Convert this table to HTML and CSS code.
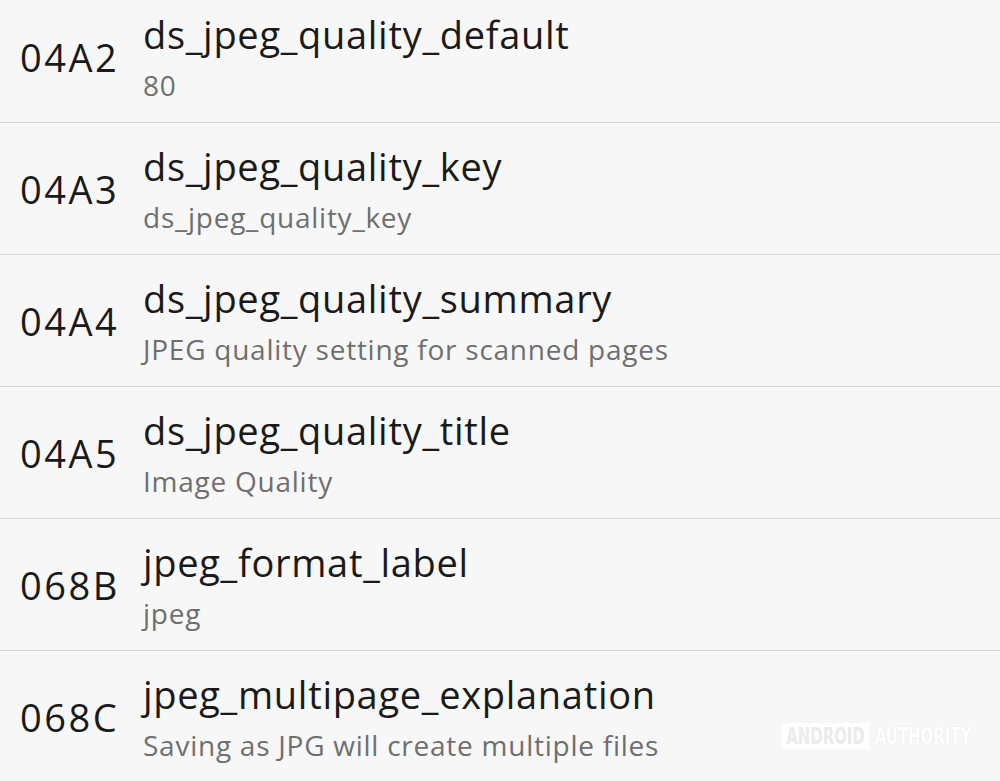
FILE: index.html
```html
<!DOCTYPE html>
<html>

<head>
    <link rel="stylesheet" href="styles.css">
</head>

<body>

    <div class="list">
        <div class="row">
            <div class="code">04A2</div>
            <div class="text">
                <div class="title">ds_jpeg_quality_default</div>
                <div class="summary">80</div>
            </div>
        </div>
        <div class="row">
            <div class="code">04A3</div>
            <div class="text">
                <div class="title">ds_jpeg_quality_key</div>
                <div class="summary">ds_jpeg_quality_key</div>
            </div>
        </div>
        <div class="row">
            <div class="code">04A4</div>
            <div class="text">
                <div class="title">ds_jpeg_quality_summary</div>
                <div class="summary">JPEG quality setting for scanned pages</div>
            </div>
        </div>
        <div class="row">
            <div class="code">04A5</div>
            <div class="text">
                <div class="title">ds_jpeg_quality_title</div>
                <div class="summary">Image Quality</div>
            </div>
        </div>
        <div class="row">
            <div class="code">068B</div>
            <div class="text">
                <div class="title">jpeg_format_label</div>
                <div class="summary">jpeg</div>
            </div>
        </div>
        <div class="row">
            <div class="code">068C</div>
            <div class="text">
                <div class="title">jpeg_multipage_explanation</div>
                <div class="summary">Saving as JPG will create multiple files</div>
            </div>
        </div>
    </div>

    <!-- watermark -->
    <div class="mark">
        <span class="mark-box">ANDROID</span>
        <span class="mark-text">AUTHORITY</span>
    </div>

</body>

</html>
```

FILE: styles.css
```css
html,
body {
    margin: 0;
    height: 100%;
    background: #f7f7f7;
    overflow: hidden;
}

body {
    font-family: "Open Sans", Roboto, sans-serif;
    color: #1a1a1a;
    position: relative;
}

.list {
    margin-top: -9px;
}

.row {
    display: flex;
    align-items: center;
    height: 131px;
    border-bottom: 1px solid #d6d6d6;
}

.code {
    width: 123px;
    padding-left: 20px;
    font-size: 38px;
    line-height: 44px;
    letter-spacing: 2.5px;
    flex-shrink: 0;
}

.text {
    display: flex;
    flex-direction: column;
    gap: 11px;
    padding-bottom: 1px;
}

.title {
    font-size: 38px;
    line-height: 46px;
    letter-spacing: 0.7px;
}

.summary {
    font-size: 28px;
    line-height: 34px;
    letter-spacing: 0.75px;
    color: #6f6f6f;
}

.mark {
    position: absolute;
    left: 782px;
    top: 723px;
    display: flex;
    align-items: center;
    gap: 8px;
    font-family: "DejaVu Sans Condensed", "Liberation Sans", sans-serif;
    font-weight: bold;
    font-size: 23px;
    line-height: 26px;
    transform: scaleX(0.72);
    transform-origin: left center;
}

.mark-box {
    background: #ffffff;
    color: #ebebeb;
    padding: 0 6px;
}

.mark-text {
    color: #ffffff;
    text-shadow: 0 0 2px #e4e4e4;
}
```
